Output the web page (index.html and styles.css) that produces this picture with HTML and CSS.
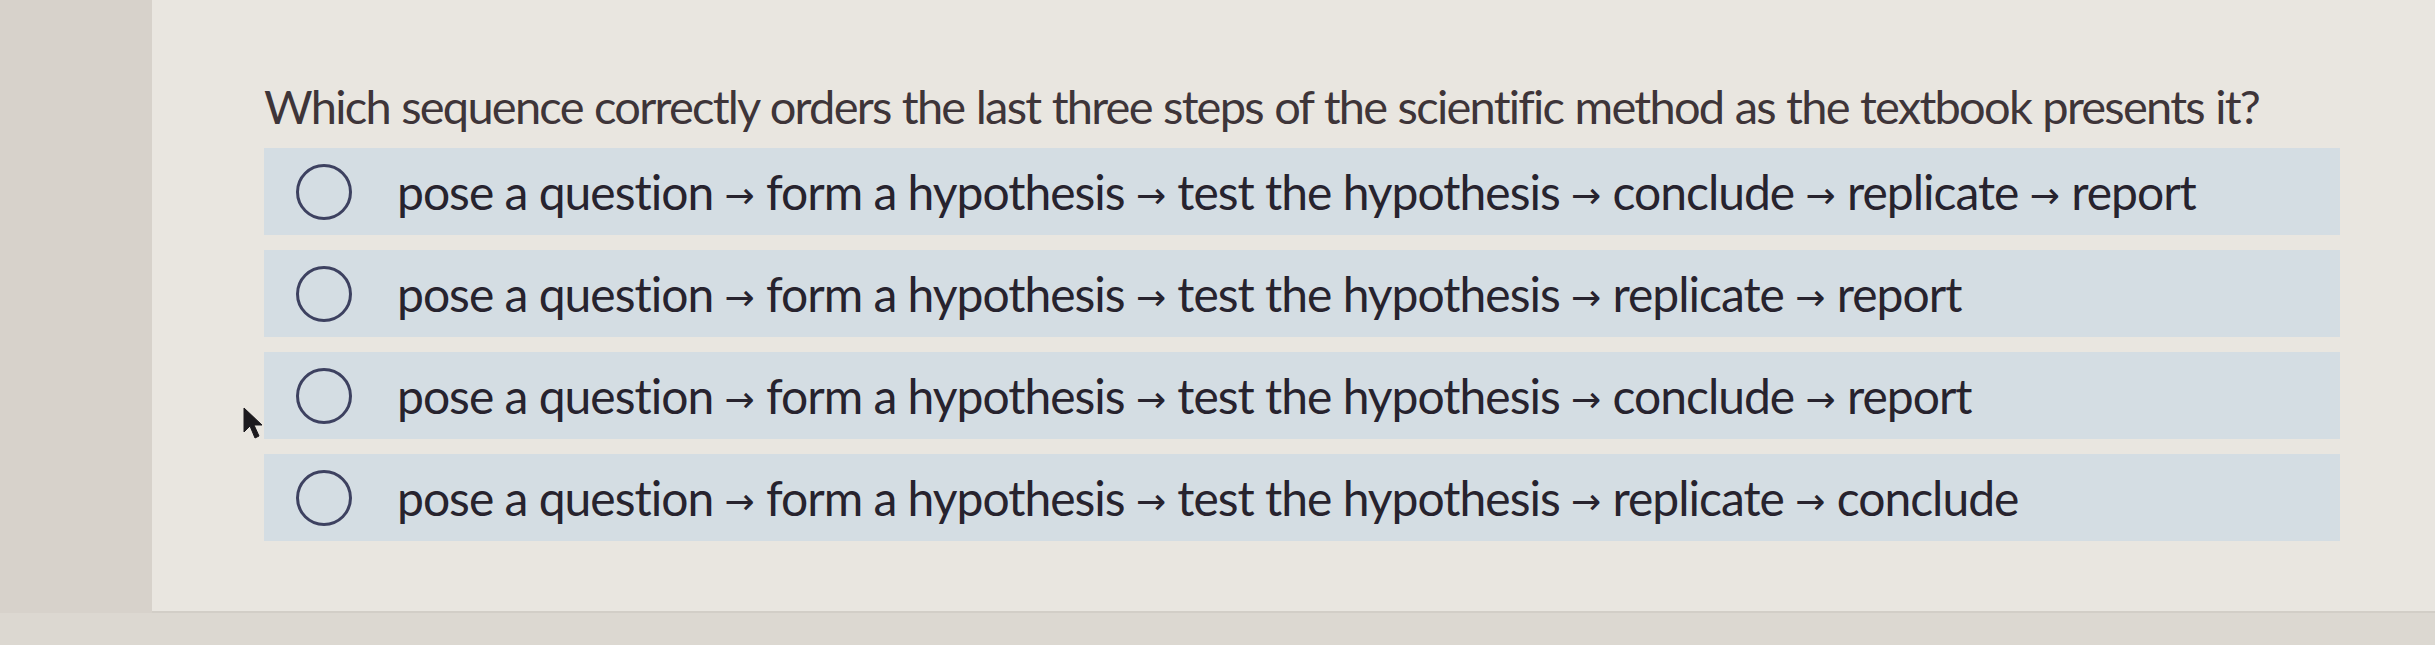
FILE: index.html
```html
<!DOCTYPE html>
<html lang="en">
<head>
<meta charset="utf-8">
<title>Question</title>
<link rel="stylesheet" href="styles.css">
</head>
<body>
<div class="screen">
  <div class="side"></div>
  <div class="panel">
    <p class="question">Which sequence correctly orders the last three steps of the scientific method as the textbook presents it?</p>
    <div class="options">
      <label class="option"><span class="radio"></span><span class="text">pose a question <span class="arrow">→</span> form a hypothesis <span class="arrow">→</span> test the hypothesis <span class="arrow">→</span> conclude <span class="arrow">→</span> replicate <span class="arrow">→</span> report</span></label>
      <label class="option"><span class="radio"></span><span class="text">pose a question <span class="arrow">→</span> form a hypothesis <span class="arrow">→</span> test the hypothesis <span class="arrow">→</span> replicate <span class="arrow">→</span> report</span></label>
      <label class="option"><span class="radio"></span><span class="text">pose a question <span class="arrow">→</span> form a hypothesis <span class="arrow">→</span> test the hypothesis <span class="arrow">→</span> conclude <span class="arrow">→</span> report</span></label>
      <label class="option"><span class="radio"></span><span class="text">pose a question <span class="arrow">→</span> form a hypothesis <span class="arrow">→</span> test the hypothesis <span class="arrow">→</span> replicate <span class="arrow">→</span> conclude</span></label>
    </div>
  </div>
</div>
<div class="bottom"></div>
<svg class="cursor" width="22" height="34" viewBox="0 0 22 34"><path d="M1 1 L1 25 L7 19 L12 31 L16 29 L11 18 L19 18 Z" fill="#1c1a1e" stroke="#1c1a1e" stroke-width="1" stroke-linejoin="round"/></svg>
</body>
</html>
```
FILE: styles.css
```css
html, body {
  margin: 0;
  padding: 0;
}
body {
  width: 2435px;
  height: 645px;
  background: #dcd8d1;
  font-family: "Lato", "Open Sans", sans-serif;
  position: relative;
  overflow: hidden;
}
.screen {
  display: flex;
  height: 613px;
}
.side {
  width: 152px;
  background: #d7d2cb;
}
.panel {
  flex: 1;
  background: #e9e6e0;
  padding-left: 112px;
  border-bottom: 2px solid #d2cec7;
}
.question {
  margin: 76px 0 0 0;
  font-size: 47px;
  line-height: 60px;
  color: #3e3539;
  letter-spacing: -1.75px;
  word-spacing: 1px;
  white-space: nowrap;
}
.options {
  display: flex;
  flex-direction: column;
  gap: 15px;
  width: 2076px;
  margin-top: 12px;
}
.option {
  display: flex;
  align-items: center;
  height: 87px;
  background: #d4dde3;
  padding-left: 32px;
  gap: 45px;
}
.radio {
  width: 50px;
  height: 50px;
  border: 3px solid #3d4160;
  border-radius: 50%;
  flex: none;
}
.text {
  font-size: 48px;
  color: #27232e;
  letter-spacing: -1px;
  white-space: nowrap;
}
.arrow {
  font-family: "DejaVu Sans", sans-serif;
  font-size: 36px;
  letter-spacing: 0;
  position: relative;
  top: -2px;
}
.cursor {
  position: absolute;
  left: 243px;
  top: 407px;
}
```
